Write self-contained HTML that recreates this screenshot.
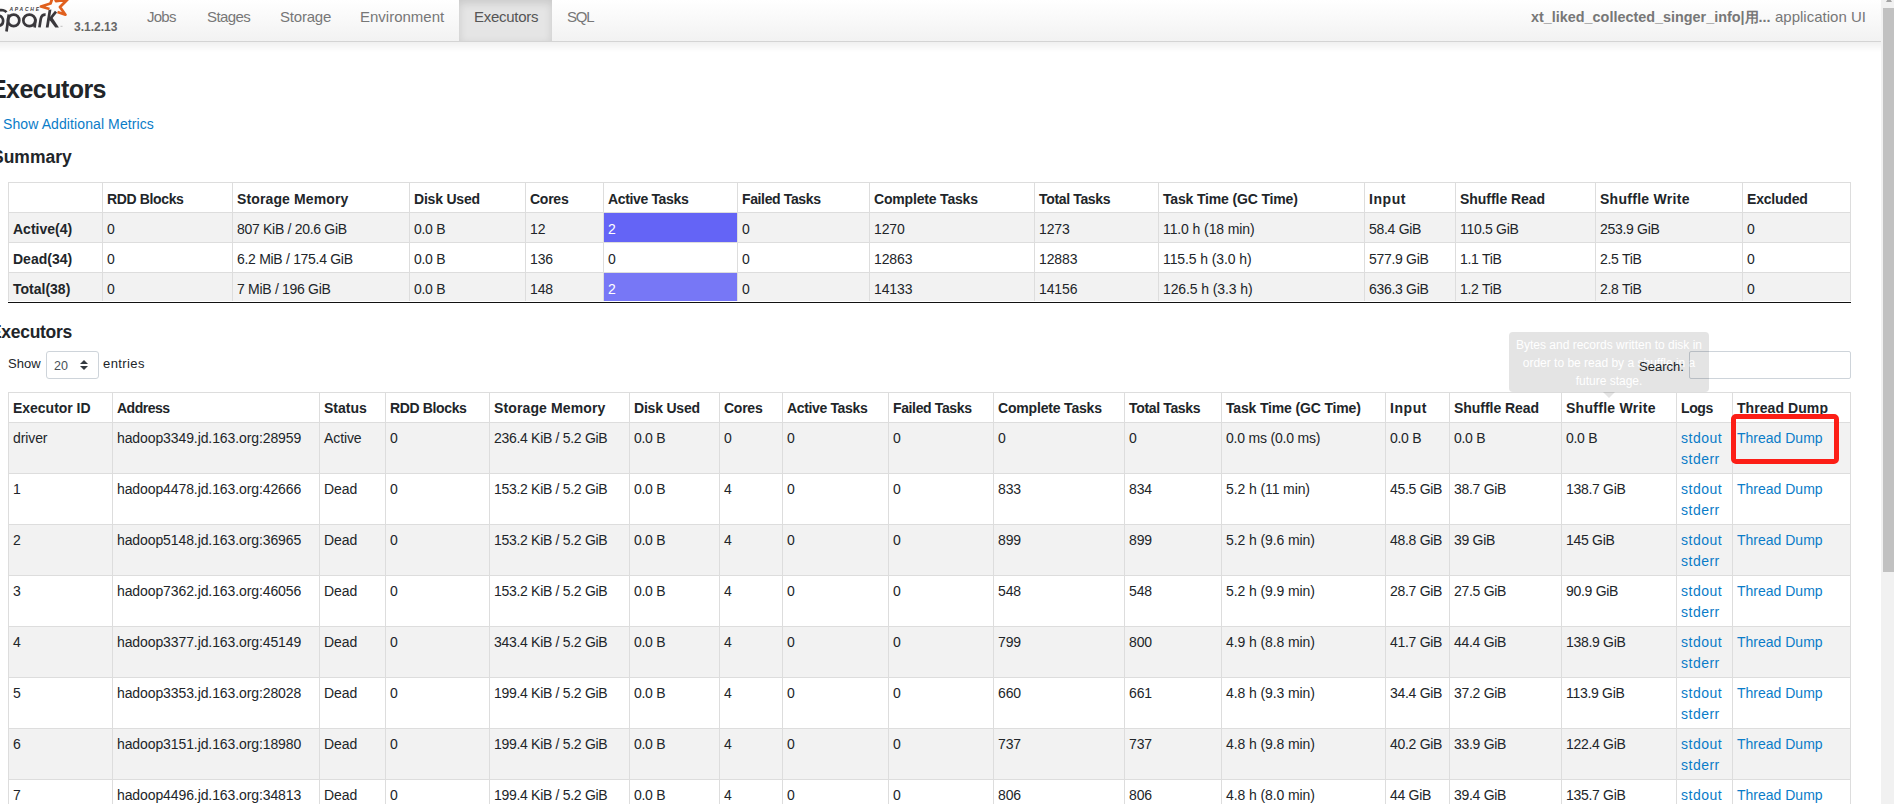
<!DOCTYPE html><html><head><meta charset="utf-8"><title>Executors</title><style>
*{margin:0;padding:0;box-sizing:border-box}
html,body{width:1894px;height:804px;overflow:hidden;background:#fff}
body{position:relative;font-family:"Liberation Sans",sans-serif;color:#212529;font-size:14px}
.a{position:absolute;white-space:nowrap}
.t{position:absolute;white-space:nowrap;line-height:21px;font-size:14px;letter-spacing:-0.1px}
.lk{letter-spacing:0}
.b{font-weight:bold;letter-spacing:-0.3px}
.lbl{letter-spacing:0}
.lk{color:#0a7cc8}
.hl{position:absolute;height:1px;background:#dddddd}
.vl{position:absolute;width:1px;background:#dddddd}
</style></head><body>
<div class="a" style="left:0;top:0;width:1881px;height:41px;background:linear-gradient(#ffffff,#f2f2f2);"></div>
<div class="a" style="left:0;top:41px;width:1881px;height:1px;background:#d4d4d4;"></div>
<div class="a" style="left:0;top:42px;width:1881px;height:10px;background:linear-gradient(rgba(0,0,0,0.06),rgba(0,0,0,0));"></div>
<div class="a" style="left:459px;top:0;width:93px;height:41px;background:#e5e5e5;box-shadow:inset 0 3px 8px rgba(0,0,0,0.125);"></div>
<div class="a" style="left:147px;top:7px;font-size:15px;line-height:20px;color:#777;letter-spacing:-0.75px">Jobs</div>
<div class="a" style="left:207px;top:7px;font-size:15px;line-height:20px;color:#777;letter-spacing:-0.6px">Stages</div>
<div class="a" style="left:280px;top:7px;font-size:15px;line-height:20px;color:#777;letter-spacing:-0.2px">Storage</div>
<div class="a" style="left:360px;top:7px;font-size:15px;line-height:20px;color:#777;letter-spacing:0px">Environment</div>
<div class="a" style="left:474px;top:7px;font-size:15px;line-height:20px;color:#555;letter-spacing:-0.27px">Executors</div>
<div class="a" style="left:567px;top:7px;font-size:15px;line-height:20px;color:#777;letter-spacing:-1.2px">SQL</div>
<svg class="a" style="left:0;top:0" width="72" height="36" viewBox="0 0 72 36">
<g fill="none" stroke="#3a383c" stroke-width="2.7" stroke-linecap="butt">
<path d="M6.4,12.2 C5.2,10.2 1.5,9.6 -1.5,10.6"/>
<path d="M-2,15.6 C1.8,15.8 3.3,18.5 3.1,21.3 C2.8,24.3 0.5,25.9 -2.5,25.9"/>
<path d="M8.8,14.5 L6.5,31.5"/>
<ellipse cx="13.65" cy="20.4" rx="5.65" ry="5.8"/>
<ellipse cx="29.35" cy="20.4" rx="6" ry="5.8"/>
<path d="M35.5,19 L34.6,27.5"/>
<path d="M39.4,27.4 L40.8,18.8 C41.3,16 43,14.6 45.6,14.7"/>
<path d="M56,11.6 L49.2,20.2"/>
</g>
<g fill="#3a383c" stroke="none">
<polygon points="48.6,10 51.4,9.5 48.6,27.4 45.8,27.4"/>
<polygon points="49.6,19.9 52.3,17.6 58.9,27.4 55.3,27.4"/>
</g>
<text x="9.5" y="10.9" font-family="Liberation Sans" font-weight="bold" font-style="italic" font-size="5" fill="#3a383c" letter-spacing="1.75">APACHE</text>
<path d="M60.5,26.3 L62.5,26.3" stroke="#999" stroke-width="0.6"/>
<polyline points="49.5,9 41,6.5 50.5,3.5 53.5,-5 56,1 67.5,-0.5 60,7 65.4,14.7 57.5,12" fill="none" stroke="#e0601e" stroke-width="2.8" stroke-linejoin="round"/>
</svg>
<div class="a" style="left:74px;top:20px;font-size:12px;line-height:14px;font-weight:bold;color:#666">3.1.2.13</div>
<div class="a" style="left:1531px;top:7px;font-size:14.4px;line-height:20px;font-weight:bold;color:#777">xt_liked_collected_singer_info|用...</div>
<div class="a" style="left:1775px;top:7px;font-size:15px;line-height:20px;color:#777">application UI</div>
<div class="a" style="left:-10px;top:74px;font-size:25px;line-height:30px;font-weight:bold;letter-spacing:-0.55px">Executors</div>
<div class="a lk" style="left:3px;top:114px;font-size:14px;line-height:20px;letter-spacing:0.1px">Show Additional Metrics</div>
<div class="a" style="left:-8px;top:146px;font-size:17.5px;line-height:22px;font-weight:bold">Summary</div>
<div class="a" style="left:8px;top:213px;width:1842px;height:29px;background:#f2f2f2"></div>
<div class="a" style="left:8px;top:273px;width:1842px;height:28px;background:#f2f2f2"></div>
<div class="a" style="left:604px;top:213px;width:133px;height:29px;background:#6464f6"></div>
<div class="a" style="left:604px;top:273px;width:133px;height:28px;background:#7777f6"></div>
<div class="hl" style="left:8px;top:182px;width:1843px"></div>
<div class="hl" style="left:8px;top:212px;width:1843px"></div>
<div class="hl" style="left:8px;top:242px;width:1843px"></div>
<div class="hl" style="left:8px;top:272px;width:1843px"></div>
<div class="vl" style="left:8px;top:182px;height:119px"></div>
<div class="vl" style="left:102px;top:182px;height:119px"></div>
<div class="vl" style="left:232px;top:182px;height:119px"></div>
<div class="vl" style="left:409px;top:182px;height:119px"></div>
<div class="vl" style="left:525px;top:182px;height:119px"></div>
<div class="vl" style="left:603px;top:182px;height:119px"></div>
<div class="vl" style="left:737px;top:182px;height:119px"></div>
<div class="vl" style="left:869px;top:182px;height:119px"></div>
<div class="vl" style="left:1034px;top:182px;height:119px"></div>
<div class="vl" style="left:1158px;top:182px;height:119px"></div>
<div class="vl" style="left:1364px;top:182px;height:119px"></div>
<div class="vl" style="left:1455px;top:182px;height:119px"></div>
<div class="vl" style="left:1595px;top:182px;height:119px"></div>
<div class="vl" style="left:1742px;top:182px;height:119px"></div>
<div class="vl" style="left:1850px;top:182px;height:119px"></div>
<div class="a" style="left:8px;top:302px;width:1843px;height:1px;background:#111"></div>
<div class="t b" style="left:107px;top:189px;letter-spacing:-0.36px">RDD Blocks</div>
<div class="t b" style="left:237px;top:189px;letter-spacing:0.13px">Storage Memory</div>
<div class="t b" style="left:414px;top:189px;letter-spacing:-0.21px">Disk Used</div>
<div class="t b" style="left:530px;top:189px;letter-spacing:-0.25px">Cores</div>
<div class="t b" style="left:608px;top:189px;letter-spacing:-0.35px">Active Tasks</div>
<div class="t b" style="left:742px;top:189px;letter-spacing:-0.37px">Failed Tasks</div>
<div class="t b" style="left:874px;top:189px;letter-spacing:-0.18px">Complete Tasks</div>
<div class="t b" style="left:1039px;top:189px;letter-spacing:-0.34px">Total Tasks</div>
<div class="t b" style="left:1163px;top:189px;letter-spacing:-0.16px">Task Time (GC Time)</div>
<div class="t b" style="left:1369px;top:189px;letter-spacing:0.57px">Input</div>
<div class="t b" style="left:1460px;top:189px;letter-spacing:-0.04px">Shuffle Read</div>
<div class="t b" style="left:1600px;top:189px;letter-spacing:0.28px">Shuffle Write</div>
<div class="t b" style="left:1747px;top:189px;letter-spacing:-0.2px">Excluded</div>
<div class="t b lbl" style="left:13px;top:219px">Active(4)</div>
<div class="t" style="left:107px;top:219px;letter-spacing:-0.1px">0</div>
<div class="t" style="left:237px;top:219px;letter-spacing:-0.3px">807 KiB / 20.6 GiB</div>
<div class="t" style="left:414px;top:219px;letter-spacing:-0.3px">0.0 B</div>
<div class="t" style="left:530px;top:219px;letter-spacing:-0.1px">12</div>
<div class="t" style="left:608px;top:219px;color:#fff;letter-spacing:-0.1px">2</div>
<div class="t" style="left:742px;top:219px;letter-spacing:-0.1px">0</div>
<div class="t" style="left:874px;top:219px;letter-spacing:-0.1px">1270</div>
<div class="t" style="left:1039px;top:219px;letter-spacing:-0.1px">1273</div>
<div class="t" style="left:1163px;top:219px;letter-spacing:-0.1px">11.0 h (18 min)</div>
<div class="t" style="left:1369px;top:219px;letter-spacing:-0.3px">58.4 GiB</div>
<div class="t" style="left:1460px;top:219px;letter-spacing:-0.3px">110.5 GiB</div>
<div class="t" style="left:1600px;top:219px;letter-spacing:-0.3px">253.9 GiB</div>
<div class="t" style="left:1747px;top:219px;letter-spacing:-0.1px">0</div>
<div class="t b lbl" style="left:13px;top:249px">Dead(34)</div>
<div class="t" style="left:107px;top:249px;letter-spacing:-0.1px">0</div>
<div class="t" style="left:237px;top:249px;letter-spacing:-0.3px">6.2 MiB / 175.4 GiB</div>
<div class="t" style="left:414px;top:249px;letter-spacing:-0.3px">0.0 B</div>
<div class="t" style="left:530px;top:249px;letter-spacing:-0.1px">136</div>
<div class="t" style="left:608px;top:249px;letter-spacing:-0.1px">0</div>
<div class="t" style="left:742px;top:249px;letter-spacing:-0.1px">0</div>
<div class="t" style="left:874px;top:249px;letter-spacing:-0.1px">12863</div>
<div class="t" style="left:1039px;top:249px;letter-spacing:-0.1px">12883</div>
<div class="t" style="left:1163px;top:249px;letter-spacing:-0.1px">115.5 h (3.0 h)</div>
<div class="t" style="left:1369px;top:249px;letter-spacing:-0.3px">577.9 GiB</div>
<div class="t" style="left:1460px;top:249px;letter-spacing:-0.3px">1.1 TiB</div>
<div class="t" style="left:1600px;top:249px;letter-spacing:-0.3px">2.5 TiB</div>
<div class="t" style="left:1747px;top:249px;letter-spacing:-0.1px">0</div>
<div class="t b lbl" style="left:13px;top:279px">Total(38)</div>
<div class="t" style="left:107px;top:279px;letter-spacing:-0.1px">0</div>
<div class="t" style="left:237px;top:279px;letter-spacing:-0.3px">7 MiB / 196 GiB</div>
<div class="t" style="left:414px;top:279px;letter-spacing:-0.3px">0.0 B</div>
<div class="t" style="left:530px;top:279px;letter-spacing:-0.1px">148</div>
<div class="t" style="left:608px;top:279px;color:#fff;letter-spacing:-0.1px">2</div>
<div class="t" style="left:742px;top:279px;letter-spacing:-0.1px">0</div>
<div class="t" style="left:874px;top:279px;letter-spacing:-0.1px">14133</div>
<div class="t" style="left:1039px;top:279px;letter-spacing:-0.1px">14156</div>
<div class="t" style="left:1163px;top:279px;letter-spacing:-0.1px">126.5 h (3.3 h)</div>
<div class="t" style="left:1369px;top:279px;letter-spacing:-0.3px">636.3 GiB</div>
<div class="t" style="left:1460px;top:279px;letter-spacing:-0.3px">1.2 TiB</div>
<div class="t" style="left:1600px;top:279px;letter-spacing:-0.3px">2.8 TiB</div>
<div class="t" style="left:1747px;top:279px;letter-spacing:-0.1px">0</div>
<div class="a" style="left:-10px;top:321px;font-size:17.5px;line-height:22px;font-weight:bold;letter-spacing:-0.3px">Executors</div>
<div class="a" style="left:8px;top:356px;font-size:13px;line-height:16px">Show</div>
<div class="a" style="left:46px;top:351px;width:53px;height:28px;border:1px solid #ced4da;border-radius:3px;background:#fff"></div>
<div class="a" style="left:54px;top:358px;font-size:12.5px;line-height:16px;color:#495057">20</div>
<svg class="a" style="left:79px;top:359px" width="10" height="12" viewBox="0 0 10 12"><path d="M1 5 L5 1 L9 5 Z M1 7 L5 11 L9 7 Z" fill="#343a40"/></svg>
<div class="a" style="left:103px;top:356px;font-size:13px;line-height:16px;letter-spacing:0.4px">entries</div>
<div class="a" style="left:1639px;top:359px;font-size:13px;line-height:16px">Search:</div>
<div class="a" style="left:1689px;top:351px;width:162px;height:28px;border:1px solid #ced4da;border-radius:2px;background:#fff"></div>
<div class="a" style="left:8px;top:423px;width:1842px;height:50px;background:#f2f2f2"></div>
<div class="a" style="left:8px;top:525px;width:1842px;height:50px;background:#f2f2f2"></div>
<div class="a" style="left:8px;top:627px;width:1842px;height:50px;background:#f2f2f2"></div>
<div class="a" style="left:8px;top:729px;width:1842px;height:50px;background:#f2f2f2"></div>
<div class="hl" style="left:8px;top:392px;width:1843px"></div>
<div class="hl" style="left:8px;top:422px;width:1843px"></div>
<div class="hl" style="left:8px;top:473px;width:1843px"></div>
<div class="hl" style="left:8px;top:524px;width:1843px"></div>
<div class="hl" style="left:8px;top:575px;width:1843px"></div>
<div class="hl" style="left:8px;top:626px;width:1843px"></div>
<div class="hl" style="left:8px;top:677px;width:1843px"></div>
<div class="hl" style="left:8px;top:728px;width:1843px"></div>
<div class="hl" style="left:8px;top:779px;width:1843px"></div>
<div class="vl" style="left:8px;top:392px;height:412px"></div>
<div class="vl" style="left:112px;top:392px;height:412px"></div>
<div class="vl" style="left:319px;top:392px;height:412px"></div>
<div class="vl" style="left:385px;top:392px;height:412px"></div>
<div class="vl" style="left:489px;top:392px;height:412px"></div>
<div class="vl" style="left:629px;top:392px;height:412px"></div>
<div class="vl" style="left:719px;top:392px;height:412px"></div>
<div class="vl" style="left:782px;top:392px;height:412px"></div>
<div class="vl" style="left:888px;top:392px;height:412px"></div>
<div class="vl" style="left:993px;top:392px;height:412px"></div>
<div class="vl" style="left:1124px;top:392px;height:412px"></div>
<div class="vl" style="left:1221px;top:392px;height:412px"></div>
<div class="vl" style="left:1385px;top:392px;height:412px"></div>
<div class="vl" style="left:1449px;top:392px;height:412px"></div>
<div class="vl" style="left:1561px;top:392px;height:412px"></div>
<div class="vl" style="left:1676px;top:392px;height:412px"></div>
<div class="vl" style="left:1732px;top:392px;height:412px"></div>
<div class="vl" style="left:1850px;top:392px;height:412px"></div>
<div class="t b" style="left:13px;top:398px;letter-spacing:-0.02px">Executor ID</div>
<div class="t b" style="left:117px;top:398px;letter-spacing:-0.5px">Address</div>
<div class="t b" style="left:324px;top:398px;letter-spacing:0.0px">Status</div>
<div class="t b" style="left:390px;top:398px;letter-spacing:-0.36px">RDD Blocks</div>
<div class="t b" style="left:494px;top:398px;letter-spacing:0.13px">Storage Memory</div>
<div class="t b" style="left:634px;top:398px;letter-spacing:-0.21px">Disk Used</div>
<div class="t b" style="left:724px;top:398px;letter-spacing:-0.25px">Cores</div>
<div class="t b" style="left:787px;top:398px;letter-spacing:-0.35px">Active Tasks</div>
<div class="t b" style="left:893px;top:398px;letter-spacing:-0.37px">Failed Tasks</div>
<div class="t b" style="left:998px;top:398px;letter-spacing:-0.18px">Complete Tasks</div>
<div class="t b" style="left:1129px;top:398px;letter-spacing:-0.34px">Total Tasks</div>
<div class="t b" style="left:1226px;top:398px;letter-spacing:-0.16px">Task Time (GC Time)</div>
<div class="t b" style="left:1390px;top:398px;letter-spacing:0.57px">Input</div>
<div class="t b" style="left:1454px;top:398px;letter-spacing:-0.04px">Shuffle Read</div>
<div class="t b" style="left:1566px;top:398px;letter-spacing:0.28px">Shuffle Write</div>
<div class="t b" style="left:1681px;top:398px;letter-spacing:-0.4px">Logs</div>
<div class="t b" style="left:1737px;top:398px;letter-spacing:0.07px">Thread Dump</div>
<div class="t" style="left:13px;top:428px;letter-spacing:-0.1px">driver</div>
<div class="t" style="left:117px;top:428px;letter-spacing:-0.1px">hadoop3349.jd.163.org:28959</div>
<div class="t" style="left:324px;top:428px;letter-spacing:-0.1px">Active</div>
<div class="t" style="left:390px;top:428px;letter-spacing:-0.1px">0</div>
<div class="t" style="left:494px;top:428px;letter-spacing:-0.3px">236.4 KiB / 5.2 GiB</div>
<div class="t" style="left:634px;top:428px;letter-spacing:-0.3px">0.0 B</div>
<div class="t" style="left:724px;top:428px;letter-spacing:-0.1px">0</div>
<div class="t" style="left:787px;top:428px;letter-spacing:-0.1px">0</div>
<div class="t" style="left:893px;top:428px;letter-spacing:-0.1px">0</div>
<div class="t" style="left:998px;top:428px;letter-spacing:-0.1px">0</div>
<div class="t" style="left:1129px;top:428px;letter-spacing:-0.1px">0</div>
<div class="t" style="left:1226px;top:428px;letter-spacing:-0.2px">0.0 ms (0.0 ms)</div>
<div class="t" style="left:1390px;top:428px;letter-spacing:-0.3px">0.0 B</div>
<div class="t" style="left:1454px;top:428px;letter-spacing:-0.3px">0.0 B</div>
<div class="t" style="left:1566px;top:428px;letter-spacing:-0.3px">0.0 B</div>
<div class="t lk" style="left:1681px;top:428px;letter-spacing:0.5px">stdout<br>stderr</div>
<div class="t lk" style="left:1737px;top:428px">Thread Dump</div>
<div class="t" style="left:13px;top:479px;letter-spacing:-0.1px">1</div>
<div class="t" style="left:117px;top:479px;letter-spacing:-0.1px">hadoop4478.jd.163.org:42666</div>
<div class="t" style="left:324px;top:479px;letter-spacing:-0.1px">Dead</div>
<div class="t" style="left:390px;top:479px;letter-spacing:-0.1px">0</div>
<div class="t" style="left:494px;top:479px;letter-spacing:-0.3px">153.2 KiB / 5.2 GiB</div>
<div class="t" style="left:634px;top:479px;letter-spacing:-0.3px">0.0 B</div>
<div class="t" style="left:724px;top:479px;letter-spacing:-0.1px">4</div>
<div class="t" style="left:787px;top:479px;letter-spacing:-0.1px">0</div>
<div class="t" style="left:893px;top:479px;letter-spacing:-0.1px">0</div>
<div class="t" style="left:998px;top:479px;letter-spacing:-0.1px">833</div>
<div class="t" style="left:1129px;top:479px;letter-spacing:-0.1px">834</div>
<div class="t" style="left:1226px;top:479px;letter-spacing:-0.1px">5.2 h (11 min)</div>
<div class="t" style="left:1390px;top:479px;letter-spacing:-0.3px">45.5 GiB</div>
<div class="t" style="left:1454px;top:479px;letter-spacing:-0.3px">38.7 GiB</div>
<div class="t" style="left:1566px;top:479px;letter-spacing:-0.3px">138.7 GiB</div>
<div class="t lk" style="left:1681px;top:479px;letter-spacing:0.5px">stdout<br>stderr</div>
<div class="t lk" style="left:1737px;top:479px">Thread Dump</div>
<div class="t" style="left:13px;top:530px;letter-spacing:-0.1px">2</div>
<div class="t" style="left:117px;top:530px;letter-spacing:-0.1px">hadoop5148.jd.163.org:36965</div>
<div class="t" style="left:324px;top:530px;letter-spacing:-0.1px">Dead</div>
<div class="t" style="left:390px;top:530px;letter-spacing:-0.1px">0</div>
<div class="t" style="left:494px;top:530px;letter-spacing:-0.3px">153.2 KiB / 5.2 GiB</div>
<div class="t" style="left:634px;top:530px;letter-spacing:-0.3px">0.0 B</div>
<div class="t" style="left:724px;top:530px;letter-spacing:-0.1px">4</div>
<div class="t" style="left:787px;top:530px;letter-spacing:-0.1px">0</div>
<div class="t" style="left:893px;top:530px;letter-spacing:-0.1px">0</div>
<div class="t" style="left:998px;top:530px;letter-spacing:-0.1px">899</div>
<div class="t" style="left:1129px;top:530px;letter-spacing:-0.1px">899</div>
<div class="t" style="left:1226px;top:530px;letter-spacing:-0.1px">5.2 h (9.6 min)</div>
<div class="t" style="left:1390px;top:530px;letter-spacing:-0.3px">48.8 GiB</div>
<div class="t" style="left:1454px;top:530px;letter-spacing:-0.3px">39 GiB</div>
<div class="t" style="left:1566px;top:530px;letter-spacing:-0.3px">145 GiB</div>
<div class="t lk" style="left:1681px;top:530px;letter-spacing:0.5px">stdout<br>stderr</div>
<div class="t lk" style="left:1737px;top:530px">Thread Dump</div>
<div class="t" style="left:13px;top:581px;letter-spacing:-0.1px">3</div>
<div class="t" style="left:117px;top:581px;letter-spacing:-0.1px">hadoop7362.jd.163.org:46056</div>
<div class="t" style="left:324px;top:581px;letter-spacing:-0.1px">Dead</div>
<div class="t" style="left:390px;top:581px;letter-spacing:-0.1px">0</div>
<div class="t" style="left:494px;top:581px;letter-spacing:-0.3px">153.2 KiB / 5.2 GiB</div>
<div class="t" style="left:634px;top:581px;letter-spacing:-0.3px">0.0 B</div>
<div class="t" style="left:724px;top:581px;letter-spacing:-0.1px">4</div>
<div class="t" style="left:787px;top:581px;letter-spacing:-0.1px">0</div>
<div class="t" style="left:893px;top:581px;letter-spacing:-0.1px">0</div>
<div class="t" style="left:998px;top:581px;letter-spacing:-0.1px">548</div>
<div class="t" style="left:1129px;top:581px;letter-spacing:-0.1px">548</div>
<div class="t" style="left:1226px;top:581px;letter-spacing:-0.1px">5.2 h (9.9 min)</div>
<div class="t" style="left:1390px;top:581px;letter-spacing:-0.3px">28.7 GiB</div>
<div class="t" style="left:1454px;top:581px;letter-spacing:-0.3px">27.5 GiB</div>
<div class="t" style="left:1566px;top:581px;letter-spacing:-0.3px">90.9 GiB</div>
<div class="t lk" style="left:1681px;top:581px;letter-spacing:0.5px">stdout<br>stderr</div>
<div class="t lk" style="left:1737px;top:581px">Thread Dump</div>
<div class="t" style="left:13px;top:632px;letter-spacing:-0.1px">4</div>
<div class="t" style="left:117px;top:632px;letter-spacing:-0.1px">hadoop3377.jd.163.org:45149</div>
<div class="t" style="left:324px;top:632px;letter-spacing:-0.1px">Dead</div>
<div class="t" style="left:390px;top:632px;letter-spacing:-0.1px">0</div>
<div class="t" style="left:494px;top:632px;letter-spacing:-0.3px">343.4 KiB / 5.2 GiB</div>
<div class="t" style="left:634px;top:632px;letter-spacing:-0.3px">0.0 B</div>
<div class="t" style="left:724px;top:632px;letter-spacing:-0.1px">4</div>
<div class="t" style="left:787px;top:632px;letter-spacing:-0.1px">0</div>
<div class="t" style="left:893px;top:632px;letter-spacing:-0.1px">0</div>
<div class="t" style="left:998px;top:632px;letter-spacing:-0.1px">799</div>
<div class="t" style="left:1129px;top:632px;letter-spacing:-0.1px">800</div>
<div class="t" style="left:1226px;top:632px;letter-spacing:-0.1px">4.9 h (8.8 min)</div>
<div class="t" style="left:1390px;top:632px;letter-spacing:-0.3px">41.7 GiB</div>
<div class="t" style="left:1454px;top:632px;letter-spacing:-0.3px">44.4 GiB</div>
<div class="t" style="left:1566px;top:632px;letter-spacing:-0.3px">138.9 GiB</div>
<div class="t lk" style="left:1681px;top:632px;letter-spacing:0.5px">stdout<br>stderr</div>
<div class="t lk" style="left:1737px;top:632px">Thread Dump</div>
<div class="t" style="left:13px;top:683px;letter-spacing:-0.1px">5</div>
<div class="t" style="left:117px;top:683px;letter-spacing:-0.1px">hadoop3353.jd.163.org:28028</div>
<div class="t" style="left:324px;top:683px;letter-spacing:-0.1px">Dead</div>
<div class="t" style="left:390px;top:683px;letter-spacing:-0.1px">0</div>
<div class="t" style="left:494px;top:683px;letter-spacing:-0.3px">199.4 KiB / 5.2 GiB</div>
<div class="t" style="left:634px;top:683px;letter-spacing:-0.3px">0.0 B</div>
<div class="t" style="left:724px;top:683px;letter-spacing:-0.1px">4</div>
<div class="t" style="left:787px;top:683px;letter-spacing:-0.1px">0</div>
<div class="t" style="left:893px;top:683px;letter-spacing:-0.1px">0</div>
<div class="t" style="left:998px;top:683px;letter-spacing:-0.1px">660</div>
<div class="t" style="left:1129px;top:683px;letter-spacing:-0.1px">661</div>
<div class="t" style="left:1226px;top:683px;letter-spacing:-0.1px">4.8 h (9.3 min)</div>
<div class="t" style="left:1390px;top:683px;letter-spacing:-0.3px">34.4 GiB</div>
<div class="t" style="left:1454px;top:683px;letter-spacing:-0.3px">37.2 GiB</div>
<div class="t" style="left:1566px;top:683px;letter-spacing:-0.3px">113.9 GiB</div>
<div class="t lk" style="left:1681px;top:683px;letter-spacing:0.5px">stdout<br>stderr</div>
<div class="t lk" style="left:1737px;top:683px">Thread Dump</div>
<div class="t" style="left:13px;top:734px;letter-spacing:-0.1px">6</div>
<div class="t" style="left:117px;top:734px;letter-spacing:-0.1px">hadoop3151.jd.163.org:18980</div>
<div class="t" style="left:324px;top:734px;letter-spacing:-0.1px">Dead</div>
<div class="t" style="left:390px;top:734px;letter-spacing:-0.1px">0</div>
<div class="t" style="left:494px;top:734px;letter-spacing:-0.3px">199.4 KiB / 5.2 GiB</div>
<div class="t" style="left:634px;top:734px;letter-spacing:-0.3px">0.0 B</div>
<div class="t" style="left:724px;top:734px;letter-spacing:-0.1px">4</div>
<div class="t" style="left:787px;top:734px;letter-spacing:-0.1px">0</div>
<div class="t" style="left:893px;top:734px;letter-spacing:-0.1px">0</div>
<div class="t" style="left:998px;top:734px;letter-spacing:-0.1px">737</div>
<div class="t" style="left:1129px;top:734px;letter-spacing:-0.1px">737</div>
<div class="t" style="left:1226px;top:734px;letter-spacing:-0.1px">4.8 h (9.8 min)</div>
<div class="t" style="left:1390px;top:734px;letter-spacing:-0.3px">40.2 GiB</div>
<div class="t" style="left:1454px;top:734px;letter-spacing:-0.3px">33.9 GiB</div>
<div class="t" style="left:1566px;top:734px;letter-spacing:-0.3px">122.4 GiB</div>
<div class="t lk" style="left:1681px;top:734px;letter-spacing:0.5px">stdout<br>stderr</div>
<div class="t lk" style="left:1737px;top:734px">Thread Dump</div>
<div class="t" style="left:13px;top:785px;letter-spacing:-0.1px">7</div>
<div class="t" style="left:117px;top:785px;letter-spacing:-0.1px">hadoop4496.jd.163.org:34813</div>
<div class="t" style="left:324px;top:785px;letter-spacing:-0.1px">Dead</div>
<div class="t" style="left:390px;top:785px;letter-spacing:-0.1px">0</div>
<div class="t" style="left:494px;top:785px;letter-spacing:-0.3px">199.4 KiB / 5.2 GiB</div>
<div class="t" style="left:634px;top:785px;letter-spacing:-0.3px">0.0 B</div>
<div class="t" style="left:724px;top:785px;letter-spacing:-0.1px">4</div>
<div class="t" style="left:787px;top:785px;letter-spacing:-0.1px">0</div>
<div class="t" style="left:893px;top:785px;letter-spacing:-0.1px">0</div>
<div class="t" style="left:998px;top:785px;letter-spacing:-0.1px">806</div>
<div class="t" style="left:1129px;top:785px;letter-spacing:-0.1px">806</div>
<div class="t" style="left:1226px;top:785px;letter-spacing:-0.1px">4.8 h (8.0 min)</div>
<div class="t" style="left:1390px;top:785px;letter-spacing:-0.3px">44 GiB</div>
<div class="t" style="left:1454px;top:785px;letter-spacing:-0.3px">39.4 GiB</div>
<div class="t" style="left:1566px;top:785px;letter-spacing:-0.3px">135.7 GiB</div>
<div class="t lk" style="left:1681px;top:785px;letter-spacing:0.5px">stdout<br>stderr</div>
<div class="t lk" style="left:1737px;top:785px">Thread Dump</div>
<div class="a" style="left:1509px;top:332px;width:200px;height:66px;opacity:0.1;">
<div class="a" style="left:0;top:0;width:200px;height:60px;background:#000;border-radius:4px"></div>
<div class="a" style="left:94px;top:60px;width:0;height:0;border-left:6px solid transparent;border-right:6px solid transparent;border-top:6px solid #000"></div>
<div class="a" style="left:0;top:4px;width:200px;text-align:center;color:#fff;font-size:12px;line-height:18px;white-space:normal">Bytes and records written to disk in<br>order to be read by a shuffle in a<br>future stage.</div>
</div>
<div class="a" style="left:1731px;top:414px;width:108px;height:50px;border:5px solid #fc1e16;border-radius:5px"></div>
<div class="a" style="left:1881px;top:0;width:13px;height:804px;background:#f1f1f1"></div>
<div class="a" style="left:1883px;top:8px;width:11px;height:564px;background:#c1c1c1"></div>
<svg class="a" style="left:1884px;top:-5px" width="10" height="8"><path d="M2 7 L5 2 L8 7 Z" fill="#a3a3a3"/></svg>
</body></html>
